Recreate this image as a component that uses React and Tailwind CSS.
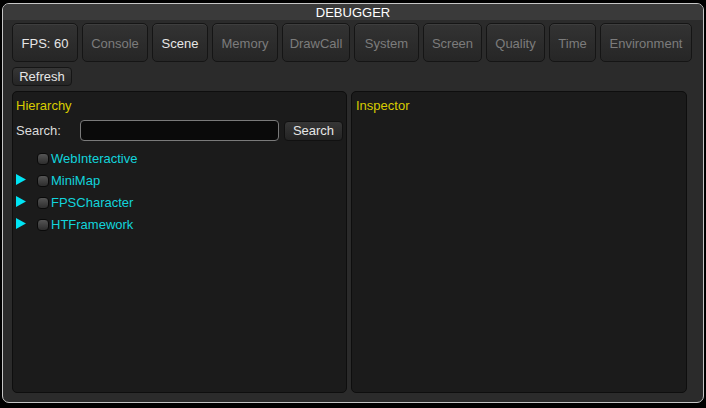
import React from 'react';

const tabs = [
  { label: 'FPS: 60', w: 'w-[66px]', on: true },
  { label: 'Console', w: 'w-[66px]' },
  { label: 'Scene', w: 'w-[56px]', on: true },
  { label: 'Memory', w: 'w-[66px]' },
  { label: 'DrawCall', w: 'w-[68px]' },
  { label: 'System', w: 'w-[65px]' },
  { label: 'Screen', w: 'w-[59px]' },
  { label: 'Quality', w: 'w-[59px]' },
  { label: 'Time', w: 'w-[47px]' },
  { label: 'Environment', w: 'w-[92px]' },
];

const nodes = [
  { name: 'WebInteractive', kids: false },
  { name: 'MiniMap', kids: true },
  { name: 'FPSCharacter', kids: true },
  { name: 'HTFramework', kids: true },
];

const Toggle = () => (
  <span className="w-[12px] h-[12px] rounded-[4px] bg-gradient-to-b from-[#555] to-[#2e2e2e] border border-[#0a0a0a]" />
);

const App = () => {
  return (
    <div
      className="w-[706px] h-[408px] bg-black pt-[3px] pl-[2px] pr-[2px] pb-[5px]"
      style={{ fontFamily: '"Liberation Sans", Arial, sans-serif' }}
    >
      <div className="h-full flex flex-col border border-[#c6c6c6] rounded-[7px] bg-[#2b2b2b] overflow-hidden">
        {/* title */}
        <div className="h-[16px] bg-[#3a3a3a] text-center text-white text-[13px] leading-[17px]">
          DEBUGGER
        </div>

        <div className="flex-1 flex flex-col pl-[9px] pr-[10px] pt-[3px] pb-[9px]">
          {/* tabs */}
          <div className="flex gap-[4px]">
            {tabs.map((t) => (
              <div
                key={t.label}
                className={`${t.w} shrink-0 h-[39px] pt-[2px] flex items-center justify-center rounded-[5px] border border-[#151515] bg-gradient-to-b from-[#333] to-[#262626] shadow-[inset_0_1px_0_#3e3e3e] text-[13px] ${t.on ? 'text-[#e6e6e6]' : 'text-[#7c7c7c]'}`}
              >
                {t.label}
              </div>
            ))}
          </div>

          <div className="mt-[5px] w-[60px] h-[19px] flex items-center justify-center rounded-[4px] border border-[#151515] bg-gradient-to-b from-[#363636] to-[#252525] text-[13px] text-[#e6e6e6]">
            Refresh
          </div>

          {/* panels */}
          <div className="flex-1 mt-[5px] mr-[6px] flex gap-[4px]">
            <div className="w-[335px] rounded-[5px] border border-[#0e0e0e] bg-[#1b1b1b] px-[3px] pt-[6px]">
              <div className="text-[13px] text-[#d8cc00] leading-[16px]">Hierarchy</div>
              <div className="mt-[6px] flex items-center h-[21px]">
                <span className="w-[64px] text-[13px] text-[#dcdcdc]">Search:</span>
                <div className="w-[199px] h-[21px] rounded-[4px] border border-[#7a7a7a] bg-[#0a0a0a]" />
                <div className="ml-[5px] w-[59px] h-[20px] flex items-center justify-center rounded-[4px] border border-[#111] bg-gradient-to-b from-[#363636] to-[#242424] text-[13px] text-[#e6e6e6]">
                  Search
                </div>
              </div>
              <div className="mt-[7px] flex flex-col">
                {nodes.map((n) => (
                  <div key={n.name} className="h-[22px] flex items-center">
                    <span className="w-[21px] flex items-center pb-[4px]">
                      {n.kids && (
                        <svg width="10" height="11" viewBox="0 0 10 11">
                          <path d="M0 0 L10 5.5 L0 11 Z" fill="#00e4f4" />
                        </svg>
                      )}
                    </span>
                    <Toggle />
                    <span className="ml-[2px] text-[13px] text-[#12d4dc]">{n.name}</span>
                  </div>
                ))}
              </div>
            </div>
            <div className="flex-1 rounded-[5px] border border-[#0e0e0e] bg-[#1b1b1b] px-[4px] pt-[6px]">
              <div className="text-[13px] text-[#d8cc00] leading-[16px]">Inspector</div>
            </div>
          </div>
        </div>
      </div>
    </div>
  );
};

export default App;
